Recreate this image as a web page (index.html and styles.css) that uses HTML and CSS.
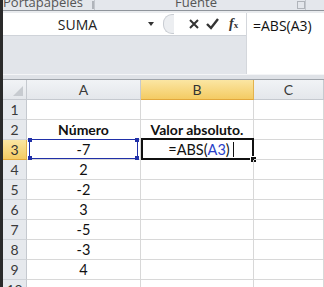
FILE: index.html
```html
<!DOCTYPE html>
<html>
<head>
    <link rel="stylesheet" href="styles.css">
</head>
<body>
    <div class="app">
        <div class="ribbon">
            <div class="group clip"><span>Portapapeles</span><span class="launch"></span></div>
            <div class="group font"><span>Fuente</span><span class="launch"></span></div>
        </div>
        <div class="ribbon-edge"></div>

        <div class="fbar">
            <div class="left">
                <div class="top">
                    <div class="namebox">
                        <span class="name">SUMA</span>
                        <span class="drop"></span>
                    </div>
                    <div class="tools">
                        <span class="knob"></span>
                        <svg class="ico" width="12" height="12" viewBox="0 0 12 12"><path d="M2 2 L10 10 M10 2 L2 10" stroke="#333" stroke-width="2"/></svg>
                        <svg class="ico" width="13" height="12" viewBox="0 0 13 12"><path d="M1 6 L5 10 L12 1" stroke="#333" stroke-width="2.4" fill="none"/></svg>
                        <span class="fx"><i>f</i><small>x</small></span>
                    </div>
                </div>
            </div>
            <div class="formula">=ABS(A3)</div>
        </div>
        <div class="fbar-edge"></div>

        <div class="sheet">
            <div class="hd corner"></div>
            <div class="hd col">A</div>
            <div class="hd col on">B</div>
            <div class="hd col">C</div>

            <div class="hd row">1</div>
            <div class="c"></div><div class="c"></div><div class="c"></div>

            <div class="hd row">2</div>
            <div class="c b">Número</div><div class="c b">Valor absoluto.</div><div class="c"></div>

            <div class="hd row on">3</div>
            <div class="c ref">-7<span class="h tl"></span><span class="h tr"></span><span class="h bl"></span><span class="h br"></span></div>
            <div class="c active"><span>=ABS(<em>A3</em>)</span><span class="caret"></span><span class="fill"></span></div>
            <div class="c"></div>

            <div class="hd row">4</div>
            <div class="c">2</div><div class="c"></div><div class="c"></div>

            <div class="hd row">5</div>
            <div class="c">-2</div><div class="c"></div><div class="c"></div>

            <div class="hd row">6</div>
            <div class="c">3</div><div class="c"></div><div class="c"></div>

            <div class="hd row">7</div>
            <div class="c">-5</div><div class="c"></div><div class="c"></div>

            <div class="hd row">8</div>
            <div class="c">-3</div><div class="c"></div><div class="c"></div>

            <div class="hd row">9</div>
            <div class="c">4</div><div class="c"></div><div class="c"></div>

            <div class="hd row">10</div>
            <div class="c"></div><div class="c"></div><div class="c"></div>
        </div>
    </div>
</body>
</html>
```

FILE: styles.css
```css
body {
    margin: 0;
    padding: 0;
    background: #fff;
    font-family: Lato, "Open Sans", sans-serif;
}
.app {
    width: 321px;
    height: 287px;
    overflow: hidden;
    border-left: 3px solid #2a2a2a;
}
.ribbon {
    height: 10px;
    background: #e4e7ec;
    display: flex;
    overflow: hidden;
    font-family: "Open Sans", sans-serif;
    font-size: 13px;
    color: #555;
}
.ribbon .group {
    height: 10px;
    display: flex;
    align-items: flex-end;
    justify-content: center;
    line-height: 15px;
    border-right: 1px solid #c3c7cd;
}
.ribbon .clip {
    width: 91px;
}
.ribbon .font {
    width: 210px;
}
.launch {
    display: inline-block;
    width: 6px;
    height: 6px;
    border: 1px solid #b0b4ba;
    margin-left: 9px;
    margin-bottom: 1px;
}
.ribbon .font .launch {
    margin-left: 80px;
    margin-right: -80px;
}
.ribbon-edge {
    height: 2px;
    border-top: 1px solid #8f949b;
    background: #e9ebee;
}
.fbar {
    display: flex;
    height: 61px;
}
.fbar .left {
    width: 243px;
    background: #e2e5ea;
}
.fbar .top {
    display: flex;
    height: 22px;
    border-bottom: 1px solid #cfd3d9;
}
.namebox {
    width: 157px;
    background: #fff;
    display: flex;
    align-items: center;
    font-family: "Open Sans", sans-serif;
    font-size: 14px;
    color: #222;
}
.namebox .name {
    flex: 1;
    text-align: center;
    padding-left: 4px;
}
.namebox .drop {
    width: 0;
    height: 0;
    border-left: 3px solid transparent;
    border-right: 3px solid transparent;
    border-top: 4px solid #333;
    margin-right: 6px;
}
.tools {
    flex: 1;
    display: flex;
    align-items: center;
    background: #fff;
}
.knob {
    width: 10px;
    height: 18px;
    border-radius: 9px 0 0 9px;
    border: 1px solid #c8ccd2;
    border-right: none;
    background: #eceef1;
    margin-left: 3px;
    margin-right: 14px;
}
.tools .ico {
    margin-right: 6px;
}
.fx {
    font-family: "Liberation Serif", serif;
    font-weight: bold;
    font-size: 14px;
    color: #333;
    margin-left: 4px;
}
.fx small {
    font-size: 9px;
}
.formula {
    flex: 1;
    padding: 3px 0 0 6px;
    font-family: "Open Sans", sans-serif;
    font-size: 14px;
    color: #111;
    border-left: 1px solid #d4d7dc;
}
.fbar-edge {
    height: 4px;
    border-top: 1px solid #f4f5f7;
    border-bottom: 1px solid #9fa4ab;
    background: #dfe2e7;
}
.sheet {
    display: grid;
    grid-template-columns: 24px 114px 113px 70px;
    grid-template-rows: repeat(11, 20px);
}
.hd {
    box-sizing: border-box;
    background: linear-gradient(#f1f3f6, #e4e7eb);
    border-right: 1px solid #c5c9cf;
    border-bottom: 1px solid #c5c9cf;
    color: #3a3a3a;
    font-size: 14px;
    display: flex;
    align-items: center;
    justify-content: center;
}
.hd.row {
    background: #e6e9ed;
    border-bottom-color: #d0d4d9;
}
.hd.on {
    background: linear-gradient(#fbe6a3, #f4cb63);
    border-right-color: #e2b24e;
    border-bottom-color: #e2a83c;
    color: #333;
}
.corner {
    position: relative;
}
.corner::after {
    content: "";
    position: absolute;
    right: 3px;
    bottom: 3px;
    border-left: 10px solid transparent;
    border-bottom: 10px solid #c7cbd0;
}
.c {
    position: relative;
    box-sizing: border-box;
    border-right: 1px solid #d8d8d8;
    border-bottom: 1px solid #d8d8d8;
    font-size: 14.5px;
    color: #111;
    display: flex;
    align-items: center;
    justify-content: center;
}
.c.b {
    font-weight: bold;
    font-size: 14px;
}
.ref::before {
    content: "";
    position: absolute;
    left: 2px;
    right: 2px;
    top: -1px;
    bottom: 0;
    border: 1px solid #2030a8;
}
.h {
    position: absolute;
    width: 4px;
    height: 4px;
    background: #2030a8;
}
.h.tl { left: 1px; top: -2px; }
.h.tr { right: 1px; top: -2px; }
.h.bl { left: 1px; bottom: -1px; }
.h.br { right: 1px; bottom: -1px; }
.active {
    padding-left: 8px;
}
.active::before {
    content: "";
    position: absolute;
    left: 0;
    right: -1px;
    top: -2px;
    bottom: -1px;
    border: 2px solid #111;
}
.active em {
    font-style: normal;
    color: #2a3fc8;
}
.caret {
    width: 1px;
    height: 15px;
    background: #111;
    margin-left: 3px;
}
.fill {
    position: absolute;
    right: -4px;
    bottom: -4px;
    width: 5px;
    height: 5px;
    background: #111;
    border: 1px solid #fff;
}
```
